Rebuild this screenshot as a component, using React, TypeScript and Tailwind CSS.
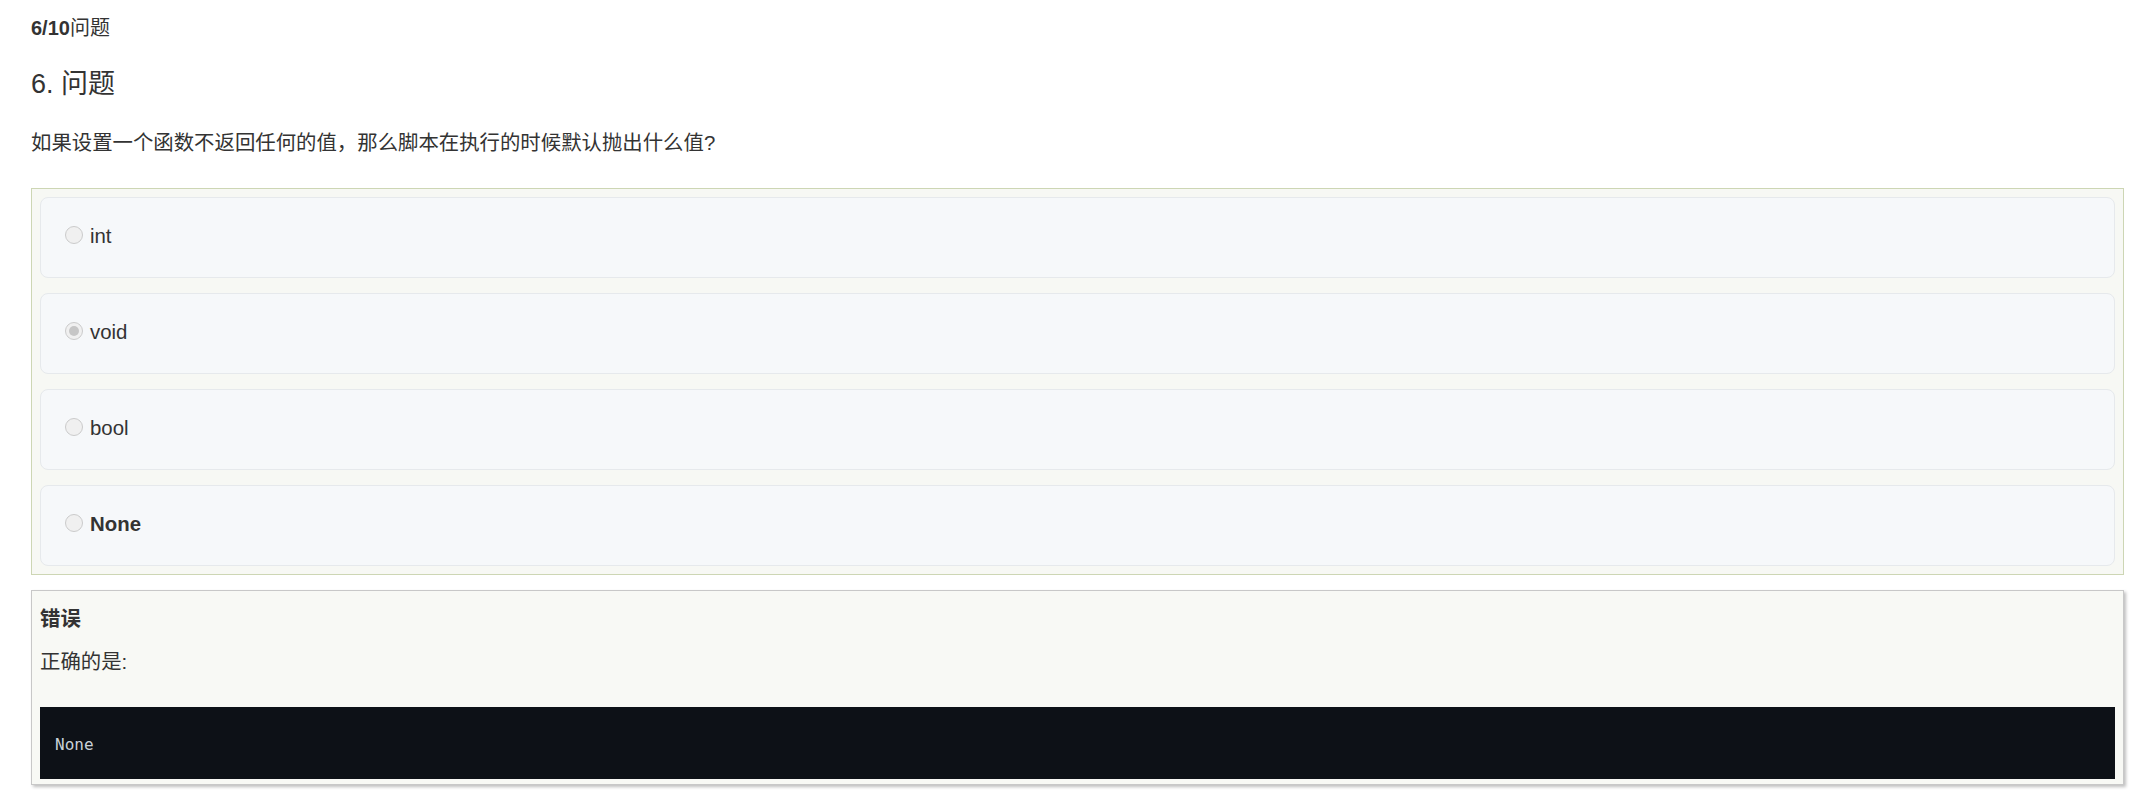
const options = [
  { label: 'int', checked: false, bold: false },
  { label: 'void', checked: true, bold: false },
  { label: 'bool', checked: false, bold: false },
  { label: 'None', checked: false, bold: true },
]

function Radio({ checked }: { checked: boolean }) {
  return (
    <span className="-mt-[2px] flex h-[18px] w-[18px] shrink-0 items-center justify-center rounded-full border border-[#cbcbcb] bg-[#f0f0f0]">
      {checked && <span className="h-[10px] w-[10px] rounded-full bg-[#c6c6c6]" />}
    </span>
  )
}

export default function App() {
  return (
    <main
      className="min-h-screen bg-white pl-[31px] pr-[13px] text-[#333]"
      style={{ fontFamily: '"Liberation Sans", Arial, "Noto Sans CJK SC", sans-serif' }}
    >
      <div className="pt-[15px] text-[20px] leading-[27px]">
        <b>6/10</b>问题
      </div>

      <h2 className="mt-[24px] text-[27px] leading-[36px] font-normal">6. 问题</h2>

      <p className="mt-[27px] text-[20.4px] leading-[28px]">
        如果设置一个函数不返回任何的值，那么脚本在执行的时候默认抛出什么值?
      </p>

      {/* options */}
      <div className="mt-[31px] flex flex-col gap-[15px] border border-[#cdd6b4] bg-[#f7f8f4] p-[8px]">
        {options.map((o) => (
          <div
            key={o.label}
            className="flex h-[81px] items-center gap-[7px] rounded-[8px] border border-[#e6e9ec] bg-[#f6f8fa] pb-[4px] pl-[24px]"
          >
            <Radio checked={o.checked} />
            <span className={`text-[20.4px] leading-[28px] ${o.bold ? 'font-bold' : ''}`}>{o.label}</span>
          </div>
        ))}
      </div>

      {/* feedback */}
      <div className="mt-[15px] border border-[#c8c8c8] bg-[#f8f9f5] px-[8px] pt-[14px] pb-[5px] shadow-[2px_2px_3px_rgba(0,0,0,0.25)]">
        <div className="text-[20.4px] leading-[28px] font-bold">错误</div>
        <div className="mt-[15px] text-[20.4px] leading-[28px]">正确的是:</div>
        <pre
          className="mt-[31px] flex h-[72px] items-center bg-[#0d1117] px-[15px] pt-[3px] text-[16px] text-[#c9d1d9]"
          style={{ fontFamily: '"DejaVu Sans Mono", monospace' }}
        >
          None
        </pre>
      </div>
    </main>
  )
}
